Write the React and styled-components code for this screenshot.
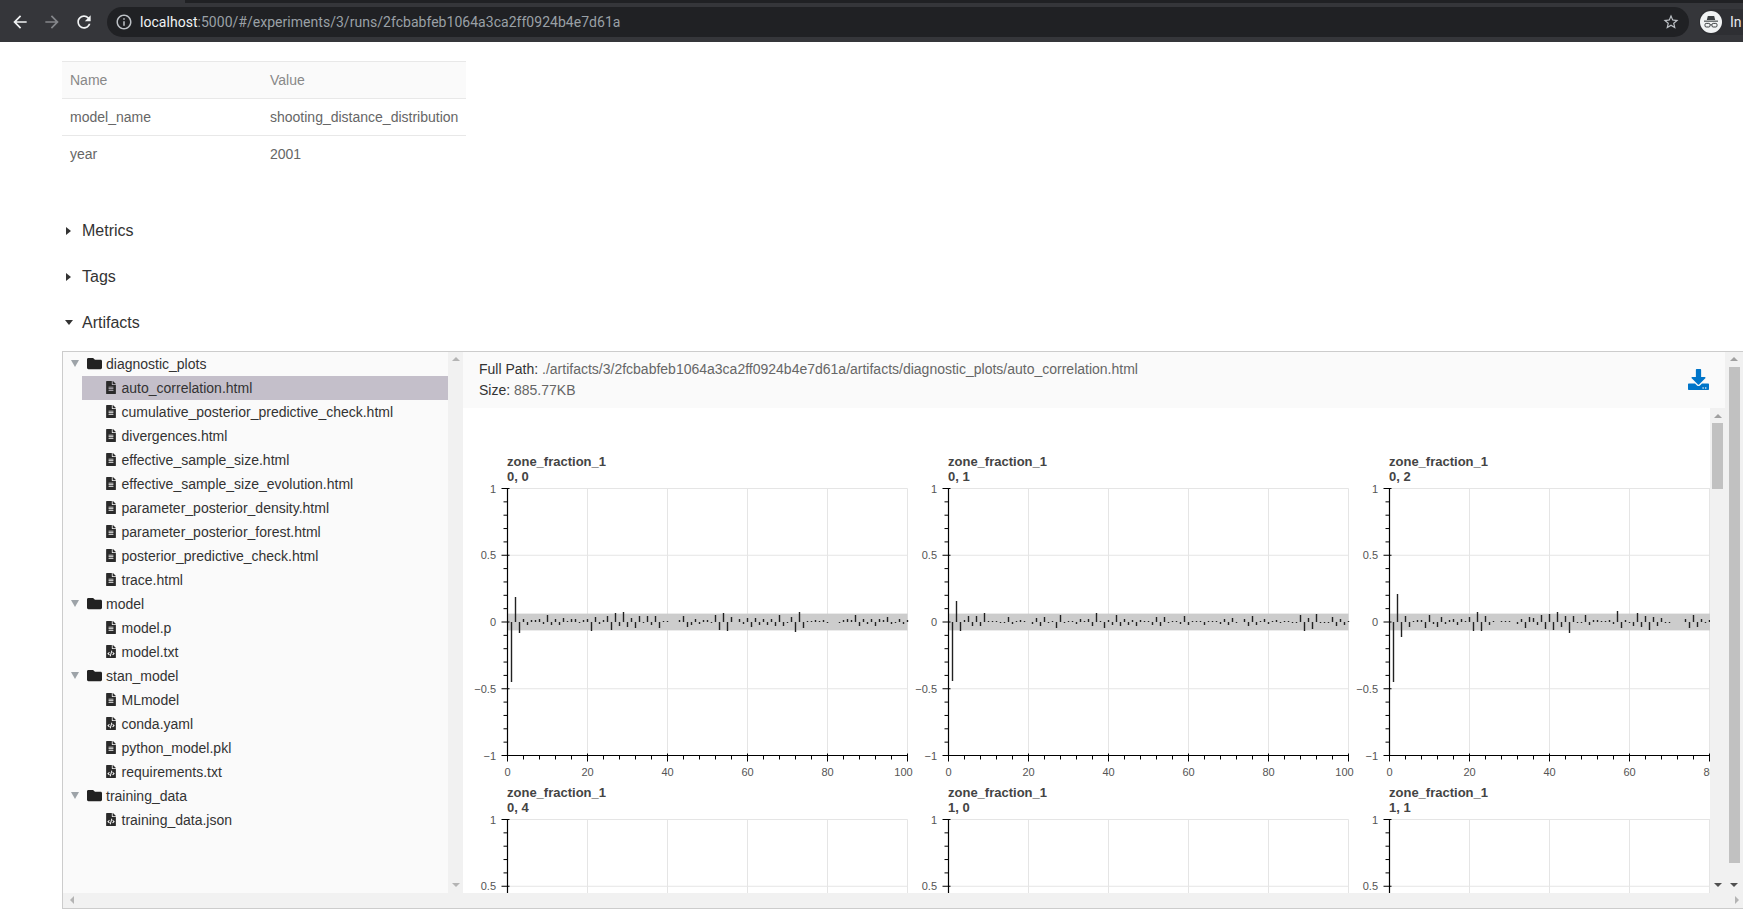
import styled, { createGlobalStyle } from 'styled-components';
import { FaDownload, FaFileAlt, FaFileCode, FaFolder } from 'react-icons/fa';

const GlobalStyle = createGlobalStyle`
  html, body {
    margin: 0;
    width: 1743px;
    height: 911px;
    overflow: hidden;
    background: #fff;
    font-family: "Liberation Sans", Arial, sans-serif;
  }
`;

// Browser chrome
const TabStrip = styled.div`
  height: 3px;
  background: #202124;
`;

const ActiveTabEdge = styled.div`
  width: 185px;
  height: 3px;
  background: #35363a;
`;

const Toolbar = styled.div`
  display: flex;
  align-items: center;
  height: 39px;
  padding: 0 0 1px 4px;
  background: #35363a;
  box-sizing: border-box;
`;

const NavButton = styled.div`
  display: flex;
  align-items: center;
  justify-content: center;
  flex: none;
  width: 32px;
  height: 32px;
  fill: ${({ $muted }) => ($muted ? '#85878b' : '#f1f3f4')};
`;

const AddressBar = styled.div`
  display: flex;
  align-items: center;
  flex: none;
  width: 1582px;
  height: 30px;
  margin-left: 7px;
  padding: 0 9px 0 8px;
  box-sizing: border-box;
  border-radius: 15px;
  background: #202124;
  fill: #bdc1c6;
`;

const Url = styled.div`
  margin-left: 7px;
  flex: 1;
  font-family: Roboto, "Noto Sans", sans-serif;
  font-size: 14px;
  letter-spacing: 0.03px;
  color: #9aa0a6;
  white-space: nowrap;

  b {
    font-weight: 400;
    color: #f1f3f4;
  }
`;

const ProfilePill = styled.div`
  display: flex;
  align-items: center;
  gap: 8px;
  flex: none;
  width: 45px;
  height: 26px;
  margin-left: 10px;
  padding-left: 1px;
  box-sizing: border-box;
  border-radius: 13px 0 0 13px;
  background: #2e2f33;
  color: #e8eaed;
  font-family: Roboto, sans-serif;
  font-size: 14px;
  white-space: nowrap;
`;

// Page
const Page = styled.div`
  width: 1743px;
  padding: 19px 0 0 62px;
  box-sizing: border-box;
  overflow: hidden;
`;

const ParamsTable = styled.table`
  width: 404px;
  border-collapse: collapse;
  table-layout: fixed;
  font-size: 14px;
  color: #666;

  tr {
    height: 37px;
    border-top: 1px solid #e8e8e8;
  }

  thead tr {
    background: #fafafa;
    color: #888;
  }

  thead tr th {
    font-weight: 400;
    text-align: left;
  }

  td, th {
    padding: 0 0 0 8px;
    white-space: nowrap;
  }
`;

const Sections = styled.div`
  padding-top: 35px;
`;

const SectionHeading = styled.div`
  display: flex;
  align-items: center;
  height: 46px;
  font-size: 16px;
  color: #333;
`;

const CaretSlot = styled.span`
  display: flex;
  align-items: center;
  justify-content: center;
  width: 13px;
  margin-right: 7px;
`;

const CaretRight = styled.i`
  width: 0;
  height: 0;
  border-left: 5px solid #333;
  border-top: 4px solid transparent;
  border-bottom: 4px solid transparent;
`;

const CaretDown = styled.i`
  width: 0;
  height: 0;
  border-top: ${({ $light }) => ($light ? '7px solid #9da3a8' : '5px solid #333')};
  border-left: 4px solid transparent;
  border-right: 4px solid transparent;
`;

const ArtifactPanel = styled.div`
  display: flex;
  flex-direction: column;
  width: 1700px;
  height: 558px;
  margin-top: 5px;
  border-top: 1px solid #ccc;
  border-bottom: 1px solid #ccc;
  border-left: 1px solid #ccc;
  box-sizing: border-box;
`;

const PanelBody = styled.div`
  display: flex;
  flex: 1;
  min-height: 0;
`;

const TreePane = styled.div`
  width: 385px;
  flex: none;
  background: #fafafa;
  font-size: 14px;
  color: #333;
`;

const FolderRow = styled.div`
  display: flex;
  align-items: center;
  height: 24px;
  padding-left: 8px;
  box-sizing: border-box;
  color: #333;
`;

const FolderIcon = styled(FaFolder)`
  flex: none;
  width: 15px;
  height: 15px;
  margin-left: 8px;
  margin-right: 4px;
  color: #222;
`;

const FileRow = styled.div`
  display: flex;
  align-items: center;
  height: 24px;
  margin-left: 19px;
  padding-left: 24px;
  box-sizing: border-box;
  background: ${({ $selected }) => ($selected ? '#c4bfca' : 'transparent')};

  svg {
    flex: none;
    width: 10px;
    height: 13px;
    margin-right: 5.5px;
    color: #2a2a2a;
  }
`;

const VScrollbar = styled.div`
  display: flex;
  flex-direction: column;
  align-items: center;
  flex: none;
  width: ${({ $width }) => $width || 15}px;
  padding: ${({ $top }) => $top || 5}px 0 6px;
  box-sizing: border-box;
  background: #f1f1f1;
`;

const ScrollUp = styled.i`
  flex: none;
  width: 0;
  height: 0;
  border-bottom: 4px solid ${({ $dark }) => ($dark ? '#a0a0a0' : '#b4b4b4')};
  border-left: 4px solid transparent;
  border-right: 4px solid transparent;
`;

const ScrollDown = styled.i`
  flex: none;
  width: 0;
  height: 0;
  margin-top: auto;
  border-top: 4px solid ${({ $dark }) => ($dark ? '#505050' : '#b4b4b4')};
  border-left: 4px solid transparent;
  border-right: 4px solid transparent;
`;

const ScrollThumb = styled.div`
  flex: none;
  width: 11px;
  height: ${({ $height }) => $height}px;
  margin-top: ${({ $gap }) => $gap}px;
  background: #c1c1c1;
`;

const ViewerPane = styled.div`
  display: flex;
  flex-direction: column;
  flex: none;
  width: 1262px;
`;

const ViewerHeader = styled.div`
  display: flex;
  align-items: center;
  justify-content: space-between;
  flex: none;
  height: 56px;
  padding: 0 16px;
  box-sizing: border-box;
  background: #fafafa;
  font-size: 14px;
  line-height: 21px;
  color: #666;

  strong {
    font-weight: 400;
    color: #333;
  }
`;

const DownloadIcon = styled(FaDownload)`
  width: 21px;
  height: 21px;
  color: #0075c9;
`;

const ViewerBody = styled.div`
  display: flex;
  flex: 1;
  min-height: 0;
`;

const PlotFrame = styled.div`
  display: grid;
  grid-template-columns: repeat(3, 441px);
  grid-auto-rows: 331px;
  align-content: start;
  flex: none;
  width: 1247px;
  padding-top: 46px;
  box-sizing: border-box;
  overflow: hidden;
  background: #fff;
`;

const Figure = styled.div`
  min-width: 0;
`;

const FigureTitle = styled.div`
  padding-left: 44px;
  font-size: 13px;
  font-weight: 700;
  line-height: 15px;
  color: #444;
  white-space: nowrap;
`;

const PlotSvg = styled.svg`
  display: block;
  overflow: visible;

  text {
    font-family: "Liberation Sans", Arial, sans-serif;
    font-size: 11px;
    fill: #555;
  }
`;

const HScrollbar = styled.div`
  display: flex;
  align-items: center;
  flex: none;
  height: 15px;
  padding-left: 7px;
  background: #f1f1f1;
`;

const ScrollLeft = styled.i`
  width: 0;
  height: 0;
  border-right: 4px solid #b4b4b4;
  border-top: 4px solid transparent;
  border-bottom: 4px solid transparent;
`;

const ScrollRight = styled.i`
  width: 0;
  height: 0;
  margin-left: auto;
  margin-right: 5px;
  border-left: 4px solid #b4b4b4;
  border-top: 4px solid transparent;
  border-bottom: 4px solid transparent;
`;

const ScrollCorner = styled.div`
  flex: none;
  width: 18px;
  height: 15px;
  background: #dcdcdc;
`;

const tree = [
  {
    name: 'diagnostic_plots',
    files: [
      ['auto_correlation.html', 'text', true],
      ['cumulative_posterior_predictive_check.html', 'text'],
      ['divergences.html', 'text'],
      ['effective_sample_size.html', 'text'],
      ['effective_sample_size_evolution.html', 'text'],
      ['parameter_posterior_density.html', 'text'],
      ['parameter_posterior_forest.html', 'text'],
      ['posterior_predictive_check.html', 'text'],
      ['trace.html', 'text'],
    ],
  },
  { name: 'model', files: [['model.p', 'text'], ['model.txt', 'code']] },
  {
    name: 'stan_model',
    files: [
      ['MLmodel', 'text'],
      ['conda.yaml', 'code'],
      ['python_model.pkl', 'text'],
      ['requirements.txt', 'code'],
    ],
  },
  { name: 'training_data', files: [['training_data.json', 'code']] },
];

// bar heights in pixels above or below the zero line, lag 1 first
const acf00 = [-60, 25, -11, 3, -3, 2, 2, 3, -2, 7, -3, 3, -3, 4, 1, 3, 3, -1, 2, 3, -9, 5, -2, 2, 6, -8, 9, -4, 10, -5, 4, -6, 6, -1, 6, -3, 6, -6, 1, 1, 0, 0, 2, 6, -5, -3, 3, -2, 2, 2, -1, 7, -8, 9, -9, 5, 0, 3, -2, 4, -5, 4, -3, 3, -3, 3, -4, 7, -4, -1, 5, -10, 10, -6, 1, 1, 2, 1, 2, -1, 0, 0, -1, 2, 3, 2, 7, -4, 3, -2, 3, -4, 3, 2, 5, -2, -1, 3, -2, 2];
const acf01 = [-59, 21, -9, 2, 6, -4, 6, -4, 9, 1, 1, 1, -1, -1, 5, -2, 1, 2, 1, 0, -2, 4, -4, 5, -1, 1, -6, 7, -1, 1, 1, -2, 3, 1, 3, -4, 9, 1, -6, 2, -3, 7, -4, 3, -3, 2, -4, 2, 1, 1, -3, 5, -4, 5, -1, 1, 1, -2, 6, -3, 1, 1, 1, -3, 1, 1, 1, -2, 3, -3, 4, -1, 0, 3, -4, 6, -3, 1, 3, -2, 1, 2, -1, 1, 1, -1, -1, 7, -9, 4, -7, 8, -1, -1, -1, 5, -4, 3, -3, 1];
const acf02 = [-60, 28, -15, 6, -5, 1, 2, 2, -6, 7, -2, -5, 5, -2, 2, 3, -3, 3, 1, 5, -9, 10, -9, 6, -3, 1, 0, 1, 1, 1, 0, -2, 3, -6, 5, 4, -3, 7, -7, 8, -8, 10, -5, 6, -11, 6, -1, -1, 7, -3, 2, 2, 1, 1, 2, -2, 11, -6, 2, -1, -4, 9, -5, 6, -8, 5, -4, 4, -1, -1, 0, 0, 0, 3, -6, 7, -5, 3, -1, 2, 1, -1, 2, 1, -3, 5, -4, 3, -2, 1, 2, -3, 4, -2, 1, 2, -1, 3, -2, 1];

const figures = [
  { id: '0, 0', acf: acf00 },
  { id: '0, 1', acf: acf01 },
  { id: '0, 2', acf: acf02 },
  { id: '0, 4' },
  { id: '1, 0' },
  { id: '1, 1' },
];

const X0 = 44.5;
const Y_TOP = 4.5;
const PX_PER_LAG = 4;
const PX_PER_UNIT = 133.5;
const yPos = (v) => Y_TOP + (1 - v) * PX_PER_UNIT;
const xPos = (lag) => X0 + lag * PX_PER_LAG;

const yLabels = [[1, '1'], [0.5, '0.5'], [0, '0'], [-0.5, '\u22120.5'], [-1, '\u22121']];
const xLabels = [0, 20, 40, 60, 80, 100];
const yMinors = [0.9, 0.8, 0.7, 0.6, 0.4, 0.3, 0.2, 0.1, -0.1, -0.2, -0.3, -0.4, -0.6, -0.7, -0.8, -0.9];
const xMinors = Array.from({ length: 26 }, (_, i) => i * 4).filter((v) => v % 20 !== 0);

function AcfPlot({ acf }) {
  const bottom = yPos(-1);
  const right = xPos(100);
  return (
    <PlotSvg width="441" height="301">
      {xLabels.slice(1).map((v) => (
        <line key={v} x1={xPos(v)} x2={xPos(v)} y1={Y_TOP} y2={bottom} stroke="#e5e5e5" />
      ))}
      {yLabels.slice(0, 4).map(([v]) => (
        <line key={v} x1={X0} x2={right} y1={yPos(v)} y2={yPos(v)} stroke="#e5e5e5" />
      ))}
      <rect x={X0} y={yPos(0) - 8.4} width={400} height={16.8} fill="#cccccc" />
      {acf && acf.map((h, i) => (
        <line
          key={i}
          x1={xPos(i + 1)}
          x2={xPos(i + 1)}
          y1={yPos(0)}
          y2={yPos(0) - h}
          stroke="#222"
          strokeWidth="1.4"
        />
      ))}
      <line x1={X0} x2={X0} y1={Y_TOP - 0.5} y2={bottom + 0.5} stroke="#000" strokeWidth="1.2" />
      <line x1={X0} x2={right} y1={bottom} y2={bottom} stroke="#000" strokeWidth="1.2" />
      {yLabels.map(([v, label]) => (
        <g key={v}>
          <line x1={X0 - 6} x2={X0 + 2} y1={yPos(v)} y2={yPos(v)} stroke="#000" />
          <text x="33" y={yPos(v) + 4} textAnchor="end">{label}</text>
        </g>
      ))}
      {yMinors.map((v) => (
        <line key={v} x1={X0 - 4} x2={X0} y1={yPos(v)} y2={yPos(v)} stroke="#000" />
      ))}
      {xLabels.map((v) => (
        <g key={v}>
          <line x1={xPos(v)} x2={xPos(v)} y1={bottom - 2} y2={bottom + 6} stroke="#000" />
          <text x={xPos(v) - (v === 100 ? 4 : 0)} y={bottom + 20} textAnchor="middle">{v}</text>
        </g>
      ))}
      {xMinors.map((v) => (
        <line key={v} x1={xPos(v)} x2={xPos(v)} y1={bottom} y2={bottom + 4} stroke="#000" />
      ))}
    </PlotSvg>
  );
}

function ChromeIcon({ d, size = 20 }) {
  return (
    <svg width={size} height={size} viewBox="0 0 24 24" style={{ flex: 'none' }}>
      <path d={d} />
    </svg>
  );
}

function IncognitoBadge() {
  return (
    <svg width="22" height="22" viewBox="0 0 22 22" style={{ flex: 'none' }}>
      <circle cx="11" cy="11" r="11" fill="#f1f3f4" />
      <path d="M7.8 5h6.4l1 4H6.8z" fill="#3c4043" />
      <rect x="4" y="9.6" width="14" height="1.1" fill="#3c4043" />
      <rect x="5" y="12.4" width="5" height="3.6" rx="1.2" fill="none" stroke="#3c4043" />
      <rect x="12" y="12.4" width="5" height="3.6" rx="1.2" fill="none" stroke="#3c4043" />
      <rect x="10" y="13.4" width="2" height="0.9" fill="#3c4043" />
    </svg>
  );
}

function BrowserBar() {
  return (
    <>
      <TabStrip>
        <ActiveTabEdge />
      </TabStrip>
      <Toolbar>
        <NavButton>
          <ChromeIcon d="M20 11H7.83l5.59-5.59L12 4l-8 8 8 8 1.41-1.41L7.83 13H20v-2z" />
        </NavButton>
        <NavButton $muted>
          <ChromeIcon d="M4 11h12.17l-5.59-5.59L12 4l8 8-8 8-1.41-1.41L16.17 13H4v-2z" />
        </NavButton>
        <NavButton>
          <ChromeIcon d="M17.65 6.35C16.2 4.9 14.21 4 12 4c-4.42 0-7.99 3.58-7.99 8s3.57 8 7.99 8c3.73 0 6.84-2.55 7.73-6h-2.08c-.82 2.33-3.04 4-5.65 4-3.31 0-6-2.69-6-6s2.69-6 6-6c1.66 0 3.14.69 4.22 1.78L13 11h7V4l-2.35 2.35z" />
        </NavButton>
        <AddressBar>
          <ChromeIcon
            size={18}
            d="M11 7h2v2h-2zm0 4h2v6h-2zm1-9C6.48 2 2 6.48 2 12s4.48 10 10 10 10-4.48 10-10S17.52 2 12 2zm0 18c-4.41 0-8-3.59-8-8s3.59-8 8-8 8 3.59 8 8-3.59 8-8 8z"
          />
          <Url><b>localhost</b>:5000/#/experiments/3/runs/2fcbabfeb1064a3ca2ff0924b4e7d61a</Url>
          <ChromeIcon
            size={18}
            d="M22 9.24l-7.19-.62L12 2 9.19 8.63 2 9.24l5.46 4.73L5.82 21 12 17.27 18.18 21l-1.63-7.03L22 9.24zM12 15.4l-3.76 2.27 1-4.28-3.32-2.88 4.38-.38L12 6.1l1.71 4.04 4.38.38-3.32 2.88 1 4.28L12 15.4z"
          />
        </AddressBar>
        <ProfilePill>
          <IncognitoBadge />
          In
        </ProfilePill>
      </Toolbar>
    </>
  );
}

function ArtifactTree() {
  return (
    <TreePane>
      {tree.map((folder) => (
        <div key={folder.name}>
          <FolderRow>
            <CaretDown $light />
            <FolderIcon />
            {folder.name}
          </FolderRow>
          {folder.files.map(([name, kind, selected]) => (
            <FileRow key={name} $selected={selected}>
              {kind === 'code' ? <FaFileCode /> : <FaFileAlt />}
              {name}
            </FileRow>
          ))}
        </div>
      ))}
    </TreePane>
  );
}

function ArtifactViewer() {
  return (
    <ViewerPane>
      <ViewerHeader>
        <div>
          <div><strong>Full Path:</strong> ./artifacts/3/2fcbabfeb1064a3ca2ff0924b4e7d61a/artifacts/diagnostic_plots/auto_correlation.html</div>
          <div><strong>Size:</strong> 885.77KB</div>
        </div>
        <DownloadIcon />
      </ViewerHeader>
      <ViewerBody>
        <PlotFrame>
          {figures.map((fig) => (
            <Figure key={fig.id}>
              <FigureTitle>zone_fraction_1<br />{fig.id}</FigureTitle>
              <AcfPlot acf={fig.acf} />
            </Figure>
          ))}
        </PlotFrame>
        <VScrollbar $top={6}>
          <ScrollUp $dark />
          <ScrollThumb $gap={5} $height={66} />
          <ScrollDown $dark />
        </VScrollbar>
      </ViewerBody>
    </ViewerPane>
  );
}

export default function App() {
  return (
    <>
      <GlobalStyle />
      <BrowserBar />
      <Page>
        <ParamsTable>
          <colgroup>
            <col width="200" />
            <col width="204" />
          </colgroup>
          <thead>
            <tr><th>Name</th><th>Value</th></tr>
          </thead>
          <tbody>
            <tr><td>model_name</td><td>shooting_distance_distribution</td></tr>
            <tr><td>year</td><td>2001</td></tr>
          </tbody>
        </ParamsTable>
        <Sections>
          <SectionHeading><CaretSlot><CaretRight /></CaretSlot>Metrics</SectionHeading>
          <SectionHeading><CaretSlot><CaretRight /></CaretSlot>Tags</SectionHeading>
          <SectionHeading><CaretSlot><CaretDown /></CaretSlot>Artifacts</SectionHeading>
        </Sections>
        <ArtifactPanel>
          <PanelBody>
            <ArtifactTree />
            <VScrollbar>
              <ScrollUp />
              <ScrollDown />
            </VScrollbar>
            <ArtifactViewer />
            <VScrollbar $width={18}>
              <ScrollUp $dark />
              <ScrollThumb $gap={6} $height={496} />
              <ScrollDown $dark />
            </VScrollbar>
          </PanelBody>
          <HScrollbar>
            <ScrollLeft />
            <ScrollRight />
            <ScrollCorner />
          </HScrollbar>
        </ArtifactPanel>
      </Page>
    </>
  );
}
